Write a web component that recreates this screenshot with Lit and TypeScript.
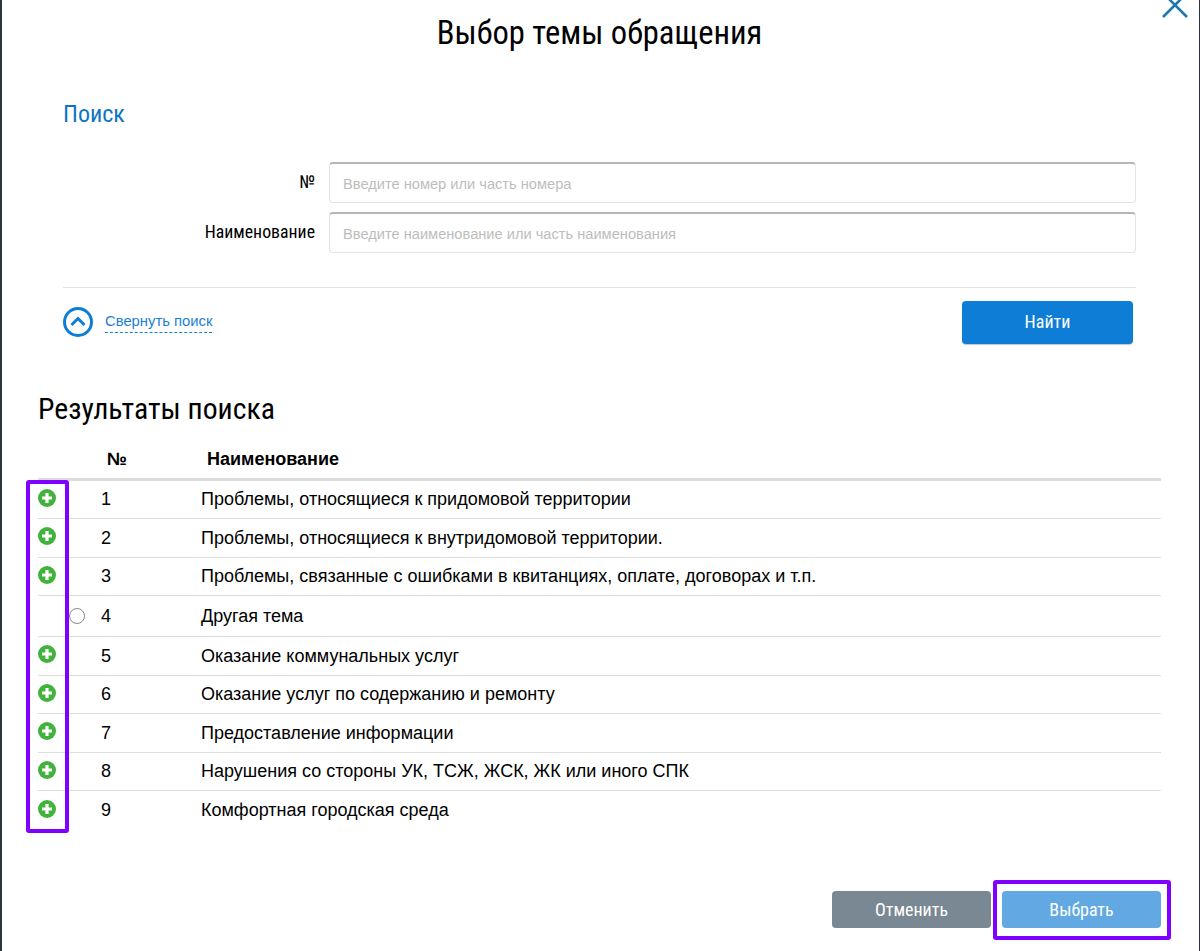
import { LitElement, html, css, svg } from "lit";
import { customElement } from "lit/decorators.js";

const ROWS: { n: number; t: string; radio?: boolean }[] = [
  { n: 1, t: "Проблемы, относящиеся к придомовой территории" },
  { n: 2, t: "Проблемы, относящиеся к внутридомовой территории." },
  { n: 3, t: "Проблемы, связанные с ошибками в квитанциях, оплате, договорах и т.п." },
  { n: 4, t: "Другая тема", radio: true },
  { n: 5, t: "Оказание коммунальных услуг" },
  { n: 6, t: "Оказание услуг по содержанию и ремонту" },
  { n: 7, t: "Предоставление информации" },
  { n: 8, t: "Нарушения со стороны УК, ТСЖ, ЖСК, ЖК или иного СПК" },
  { n: 9, t: "Комфортная городская среда" },
];

const plus = svg`<svg class="plus" width="18" height="18" viewBox="0 0 18 18"><circle cx="9" cy="9" r="9" fill="#41b23c"/><path d="M7.4 4h3.2v3.4H14v3.2h-3.4V14H7.4v-3.4H4V7.4h3.4z" fill="#fff"/></svg>`;

@customElement("app-root")
export class AppRoot extends LitElement {
  static styles = css`
    :host {
      display: block;
      position: relative;
      width: 1200px;
      height: 951px;
      box-sizing: border-box;
      background: #fff;
      border-left: 2px solid #2c3440;
      border-right: 1px solid #2c3440;
      overflow: hidden;
      font-family: "Liberation Sans", Arial, sans-serif;
      color: #000;
    }
    .narrow { font-family: "Liberation Sans Narrow", "Roboto Condensed", "Liberation Sans", sans-serif; }
    .close { position: absolute; left: 1159px; top: -10px; }
    h1 {
      margin: 0;
      padding-top: 14px;
      height: 38px;
      font-size: 32.6px;
      line-height: 38px;
      font-weight: 400;
      text-align: center;
      margin-left: -2px;
    }
    .search { margin-left: 61px; width: 1073px; }
    h2.blue {
      margin: 0;
      padding-top: 48px;
      font-size: 24px;
      line-height: 28px;
      font-weight: 400;
      color: #0b75c4;
    }
    .fields { display: flex; flex-direction: column; gap: 9px; margin-top: 34px; }
    .field { display: flex; align-items: center; gap: 14px; }
    .field label { width: 252px; text-align: right; font-size: 17.8px; flex: none; padding-bottom: 3px; }
    .input {
      flex: 1;
      height: 41px;
      box-sizing: border-box;
      border: 1px solid #e4e4e4;
      border-top: 2px solid #b4b6b8;
      border-radius: 4px;
      padding: 2px 13px 0;
      display: flex;
      align-items: center;
      font-size: 14.65px;
      color: #bdbdbd;
    }
    hr { border: 0; border-top: 1px solid #e2e2e2; margin: 34px 0 0; }
    .actions { display: flex; align-items: flex-start; justify-content: space-between; margin-top: 13px; padding-right: 3px; }
    .toggle { display: flex; align-items: center; gap: 12px; margin-top: 6px; }
    .toggle a { color: #1b7fd4; font-size: 14.8px; line-height: 17px; padding-top: 1px; padding-bottom: 2px; border-bottom: 1px dashed #1b7fd4; }
    .btn {
      display: flex;
      align-items: center;
      justify-content: center;
      color: #fff;
      border-radius: 4px;
      font-size: 18px;
    }
    .find { width: 171px; height: 43px; background: #0d7dd6; box-shadow: 0 1px 1px #c4c4c4; padding-bottom: 2px; box-sizing: border-box; }
    .results { margin-left: 36px; width: 1123px; }
    h2.res {
      margin: 0;
      padding-top: 47px;
      font-size: 29.7px;
      line-height: 36px;
      font-weight: 400;
    }
    .head {
      display: flex;
      align-items: center;
      height: 40.5px;
      margin-top: 13px;
      box-sizing: border-box;
      border-bottom: 3px solid #dcdcdc;
      font-weight: 700;
      font-size: 18px;
      padding-top: 1px;
    }
    .head .hn { margin-left: 69px; width: 100px; }
    .row {
      display: flex;
      align-items: center;
      height: 38.5px;
      box-sizing: border-box;
      border-bottom: 1px solid #dedede;
      font-size: 18px;
    }
    .row.tall { height: 41px; }
    .row:last-child { border-bottom: 0; }
    .mark { width: 63px; flex: none; display: flex; align-items: center; height: 18px; margin-bottom: 3px; }
    .row.tall .mark { justify-content: flex-end; padding-right: 16px; box-sizing: border-box; margin-bottom: 0; }
    .num { width: 100px; flex: none; padding-top: 1px; }
    .label { padding-top: 1px; }
    .radio { width: 16px; height: 16px; box-sizing: border-box; border-radius: 50%; border: 1px solid #8a8a8a; background: #fff; flex: none; }
    .plus { display: block; }
    .footer { position: absolute; left: 830px; top: 891px; display: flex; gap: 11px; }
    .footer .btn { width: 159px; height: 37px; font-size: 18px; }
    .cancel { background: #7a8893; }
    .pick { background: #62a9e3; }
    .hl { position: absolute; box-sizing: border-box; border: 4px solid #7f00ff; border-radius: 3px; pointer-events: none; }
    .hl1 { left: 24px; top: 480px; width: 43px; height: 353px; }
    .hl2 { left: 991px; top: 880px; width: 178px; height: 60px; }
  `;

  render() {
    return html`
      <svg class="close" width="28" height="28" viewBox="0 0 28 28"><path d="M2 3l24 24M26 3L2 27" stroke="#1f78ad" stroke-width="2.6" fill="none"/></svg>
      <h1 class="narrow">Выбор темы обращения</h1>
      <section class="search">
        <h2 class="blue narrow">Поиск</h2>
        <div class="fields">
          <div class="field"><label class="narrow">№</label><div class="input">Введите номер или часть номера</div></div>
          <div class="field"><label class="narrow">Наименование</label><div class="input">Введите наименование или часть наименования</div></div>
        </div>
        <hr />
        <div class="actions">
          <div class="toggle">
            <svg width="30" height="30" viewBox="0 0 30 30"><circle cx="15" cy="15" r="13.5" fill="#fff" stroke="#0d7dd6" stroke-width="3"/><path d="M8.5 18l6.5-6.5 6.5 6.5" fill="none" stroke="#0d7dd6" stroke-width="3"/></svg>
            <a>Свернуть поиск</a>
          </div>
          <div class="btn find narrow">Найти</div>
        </div>
      </section>
      <section class="results">
        <h2 class="res narrow">Результаты поиска</h2>
        <div class="head"><span class="hn">№</span><span>Наименование</span></div>
        ${ROWS.map(
          (r) => html`<div class="row ${r.radio ? "tall" : ""}">
            <span class="mark">${r.radio ? html`<span class="radio"></span>` : plus}</span>
            <span class="num">${r.n}</span>
            <span class="label">${r.t}</span>
          </div>`
        )}
      </section>
      <div class="footer">
        <div class="btn cancel narrow">Отменить</div>
        <div class="btn pick narrow">Выбрать</div>
      </div>
      <div class="hl hl1"></div>
      <div class="hl hl2"></div>
    `;
  }
}
